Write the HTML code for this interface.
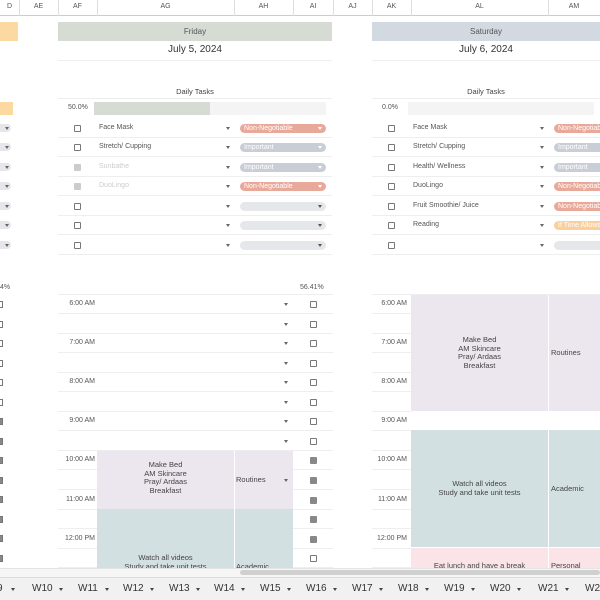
<!DOCTYPE html>
<html><head><meta charset="utf-8"><style>
*{box-sizing:border-box;margin:0;padding:0}
body{width:600px;height:600px;overflow:hidden;background:#fff;font-family:"Liberation Sans",sans-serif;color:#444;position:relative}
.a{position:absolute}
.t{position:absolute;font-size:7px;white-space:nowrap;color:#555}
.cb{position:absolute;width:7px;height:7px;border:1px solid #777;border-radius:1px;background:#fff}
.cbk{position:absolute;width:7px;height:7px;background:#888;border-radius:1px}
.cbl{position:absolute;width:7px;height:7px;background:#ccc;border-radius:1px}
.ar{position:absolute;width:0;height:0;border-left:2.5px solid transparent;border-right:2.5px solid transparent;border-top:3px solid #666}
.pill{position:absolute;height:9px;border-radius:5px;font-size:7px;color:#fff;padding-left:4px;line-height:9px;white-space:nowrap;overflow:hidden}
.hl{position:absolute;height:1px;background:#eee}
</style></head><body>
<div id="root"></div>
<script>
let h='';
function A(s,st,c){h+=`<div class="${c||'a'}" style="${st}">${s||''}</div>`}
A('','left:0;top:0;width:600px;height:16px;background:#fff;border-bottom:1px solid #ccc');
[19,58,97,234,293,333,372,411,548].forEach(x=>A('',`left:${x}px;top:0;width:1px;height:16px;background:#ddd`));
[['D',0,19],['AE',19,58],['AF',58,97],['AG',97,234],['AH',234,293],['AI',293,333],['AJ',333,372],['AK',372,411],['AL',411,548],['AM',548,600]].forEach(c=>A(c[0],`left:${c[1]}px;top:3px;width:${c[2]-c[1]}px;text-align:center;font-size:7px;color:#555`));
A('','left:0;top:22px;width:18px;height:19px;background:#fbd9a0');
A('','left:0;top:102px;width:13px;height:13px;background:#fbd9a0');
[128,147,167,186,206,225,245].forEach(y=>{A('',`left:0;top:${y-4}px;width:11px;height:8px;background:#e6e7ea;border-radius:0 4px 4px 0`);A('',`left:5px;top:${y-1}px`,'ar')});
A('4%','left:0;top:284px','t');
for(let i=0;i<14;i++){let y=304+i*19.5;A('',`left:0;top:${y-3}px;width:3px;height:7px;background:${i>=6?'#888':'#fff'};border:1px solid #777;border-left:none`)}
function day(x0,x1,name,date,bg,pct,fill,tasks){
 A(name,`left:${x0}px;top:22px;width:${x1-x0}px;height:19px;background:${bg};text-align:center;line-height:19px;font-size:8px;color:#555`);
 A(date,`left:${x0}px;top:44px;width:${x1-x0}px;text-align:center;font-size:10px;color:#333`);
 A('',`left:${x0}px;top:60px;width:${x1-x0}px`,'hl');
 A('Daily Tasks',`left:${x0}px;top:87px;width:${x1-x0}px;text-align:center;font-size:7.5px;color:#444`);
 A('',`left:${x0}px;top:98px;width:${x1-x0}px`,'hl');
 A(pct,`left:${x0+10}px;top:104px`,'t');
 A('',`left:${x0+36}px;top:102px;width:${x1-x0-42}px;height:13px;background:#f4f4f4`);
 if(fill)A('',`left:${x0+36}px;top:102px;width:${fill}px;height:13px;background:#d6dbd3`);
 [128,147,167,186,206,225,245].forEach((y,i)=>{
  let tk=tasks[i]||['',''];
  A('',`left:${x0}px;top:${y+9}px;width:${x1-x0}px`,'hl');
  A('',`left:${x0+16}px;top:${y-3}px`,tk[2]?'cbl':'cb');
  A(tk[0],`left:${x0+41}px;top:${y-4}px;color:${tk[2]?'#ccc':'#555'}`,'t');
  A('',`left:${x0+168}px;top:${y-1}px`,'ar');
  let pc={N:['#e9a99a','Non-Negotiable'],I:['#c9cdd6','Important'],T:['#f9cf9c','If Time Allows'],'':['#e6e7ea','']}[tk[1]];
  A(pc[1],`left:${x0+182}px;top:${y-4.5}px;width:86px;background:${pc[0]}`,'pill');
  A('',`left:${x0+260}px;top:${y-1}px;border-top-color:${tk[1]?'#fff':'#555'}`,'ar');
 });
}
day(58,332,'Friday','July 5, 2024','#d6dcd4','50.0%',116,[['Face Mask','N'],['Stretch/ Cupping','I'],['Sunbathe','I',1],['DuoLingo','N',1],['',''],['',''],['','']]);
day(372,600,'Saturday','July 6, 2024','#d3d9e0','0.0%',0,[['Face Mask','N'],['Stretch/ Cupping','I'],['Health/ Wellness','I'],['DuoLingo','N'],['Fruit Smoothie/ Juice','N'],['Reading','T'],['','']]);
A('56.41%','left:300px;top:284px','t');
A('','left:58px;top:294px;width:275px','hl');A('','left:372px;top:294px;width:228px','hl');
const times=['6:00 AM','','7:00 AM','','8:00 AM','','9:00 AM','','10:00 AM','','11:00 AM','','12:00 PM',''];
for(let i=0;i<14;i++){let y=294+i*19.55;
 A(times[i],`left:60px;top:${y+6}px;width:35px;text-align:right`,'t');
 A(times[i],`left:372px;top:${y+6}px;width:35px;text-align:right`,'t');
 A('',`left:58px;top:${y+19}px;width:275px`,'hl');A('',`left:372px;top:${y+19}px;width:39px`,'hl');
 if(i<8)A('',`left:284px;top:${y+9}px`,'ar');
 A('',`left:310px;top:${y+7}px`,(i>=8&&i<13)?'cbk':'cb');
}
A('','left:97px;top:451px;width:196px;height:58px;background:#ece6ef');
A('','left:234px;top:451px;width:1px;height:58px;background:#fff');
A('Make Bed<br>AM Skincare<br>Pray/ Ardaas<br>Breakfast','left:97px;top:461px;width:137px;text-align:center;font-size:7.5px;line-height:8.5px;color:#444');
A('Routines','left:236px;top:475px;font-size:7.5px;color:#444');A('','left:284px;top:479px','ar');
A('','left:97px;top:509px;width:196px;height:62px;background:#d3e0e2');
A('','left:234px;top:509px;width:1px;height:62px;background:#fff');
A('Watch all videos<br>Study and take unit tests','left:97px;top:554px;width:137px;text-align:center;font-size:7.5px;line-height:8.5px;color:#444');
A('Academic','left:236px;top:562px;font-size:7.5px;color:#444');
A('','left:411px;top:295px;width:189px;height:116px;background:#ece6ef');
A('','left:548px;top:295px;width:1px;height:116px;background:#fff');
A('Make Bed<br>AM Skincare<br>Pray/ Ardaas<br>Breakfast','left:411px;top:336px;width:137px;text-align:center;font-size:7.5px;line-height:8.5px;color:#444');
A('Routines','left:551px;top:348px;font-size:7.5px;color:#444');
A('','left:411px;top:430px;width:189px;height:117px;background:#d3e0e2');
A('','left:548px;top:430px;width:1px;height:117px;background:#fff');
A('Watch all videos<br>Study and take unit tests','left:411px;top:480px;width:137px;text-align:center;font-size:7.5px;line-height:8.5px;color:#444');
A('Academic','left:551px;top:484px;font-size:7.5px;color:#444');
A('','left:411px;top:548px;width:189px;height:25px;background:#fbe4e8');
A('','left:548px;top:548px;width:1px;height:25px;background:#fff');
A('Eat lunch and have a break','left:411px;top:561px;width:137px;text-align:center;font-size:7.5px;color:#444');
A('Personal','left:551px;top:561px;font-size:7.5px;color:#444');
A('','left:0;top:568px;width:600px;height:9px;background:#f6f6f6;border-top:1px solid #e4e4e4');
A('','left:240px;top:570px;width:360px;height:5px;background:#d0d0d0;border-radius:3px');
A('','left:0;top:577px;width:600px;height:23px;background:#f1f1f1;border-top:1px solid #ddd');
const tabs=[['9',-3],['W10',32],['W11',78],['W12',123],['W13',169],['W14',214],['W15',260],['W16',306],['W17',352],['W18',398],['W19',444],['W20',490],['W21',538],['W22',585]];
tabs.forEach(t=>{A(t[0],`left:${t[1]}px;top:583px;font-size:10px;color:#333`);A('',`left:${t[1]+t[0].length*6.6+7}px;top:588px;border-top-color:#444`,'ar')});
document.getElementById('root').innerHTML=h;
</script>
</body></html>
